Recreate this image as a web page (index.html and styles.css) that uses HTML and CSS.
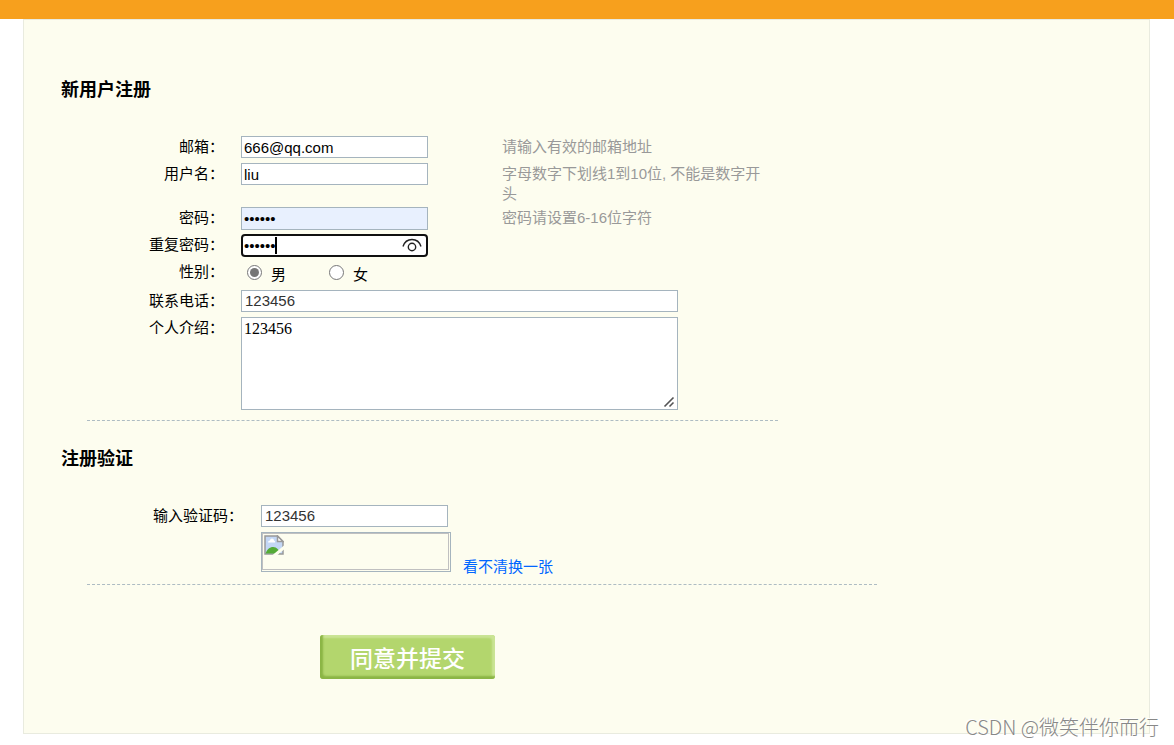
FILE: index.html
```html
<!DOCTYPE html>
<html lang="zh-CN">

<head>
    <meta charset="UTF-8">
    <meta name="viewport" content="width=device-width, initial-scale=1.0">
    <title>新用户注册</title>
    <link rel="stylesheet" href="styles.css">
</head>

<body>
    <div class="top-bar"></div>
    <form class="panel" action="#" method="post">
        <h3>新用户注册</h3>
        <div class="fields">
            <label for="email">邮箱：</label>
            <input type="text" class="text" id="email" value="666@qq.com">
            <span class="tip">请输入有效的邮箱地址</span>

            <label for="username">用户名：</label>
            <input type="text" class="text" id="username" value="liu">
            <span class="tip">字母数字下划线1到10位, 不能是数字开头</span>

            <label for="password">密码：</label>
            <input type="password" class="text filled" id="password" value="123456">
            <span class="tip">密码请设置6-16位字符</span>

            <label for="repassword">重复密码：</label>
            <div class="password-box">
                <input type="password" class="text active" id="repassword" value="123456">
                <span class="caret"></span>
                <svg class="eye" width="20" height="14" viewBox="0 0 20 14" fill="none" stroke="#222" stroke-width="1.4">
                    <path d="M1 8.500C2.500 3.800 6 1.500 10 1.500s7.500 2.300 9 7" />
                    <circle cx="10" cy="9" r="3.700" />
                </svg>
            </div>

            <span class="name">性别：</span>
            <div class="radios">
                <label><input type="radio" name="gender" value="男" checked> 男</label>
                <label><input type="radio" name="gender" value="女"> 女</label>
            </div>

            <label for="phone">联系电话：</label>
            <input type="text" class="text wide soft" id="phone" value="123456">

            <label for="introduce">个人介绍：</label>
            <textarea class="wide" id="introduce">123456</textarea>
        </div>
        <hr class="line">

        <h3>注册验证</h3>
        <div class="fields verify">
            <label for="code">输入验证码：</label>
            <input type="text" class="text soft" id="code" value="123456">
            <div class="captcha-row">
                <div class="captcha">
                    <div class="captcha-inner">
                        <!-- broken image -->
                        <svg width="20" height="20" viewBox="0 0 20 20">
                            <path d="M1 1h12.500L19 6.500V19H1z" fill="#c3d7f5" stroke="#999" stroke-width="1.500" />
                            <path d="M4 7.500a2 2 0 0 1 2-2 2 2 0 0 1 4 0 1.500 1.500 0 0 1 1 2z" fill="#fff" />
                            <path d="M1.700 18.500c1-4 4-6.500 7.500-6.500s6 3 7 6.500z" fill="#54ab36" />
                            <path d="M13.500 1v5.500H19z" fill="#fff" stroke="#999" stroke-width="1.500" />
                            <path d="M8 20.500L20.500 10v4L13 20.500z" fill="#fdfeee" />
                        </svg>
                    </div>
                </div>
                <a href="#">看不清换一张</a>
            </div>
        </div>
        <hr class="line long">

        <button type="submit">同意并提交</button>
    </form>
    <div class="watermark">CSDN @微笑伴你而行</div>
</body>

</html>
```
FILE: styles.css
```css
* {
    box-sizing: border-box;
}

body {
    position: relative;
    margin: 0;
    padding-bottom: 11px;
    font-family: "Liberation Sans", "Noto Sans CJK SC", sans-serif;
    font-size: 15px;
    line-height: 20px;
    color: #000;
    background-color: #fff;
}

.top-bar {
    height: 19px;
    background-color: #f7a01d;
}

.panel {
    margin: 0 24px 0 23px;
    padding: 58px 37px 54px;
    border: 1px solid #e9ebdf;
    background-color: #fdfdef;
}

h3 {
    margin: 0;
    font-size: 18px;
    line-height: 24px;
}

.fields {
    display: grid;
    grid-template-columns: 163px 187px 264px;
    grid-auto-rows: minmax(24px, auto);
    gap: 3px 17px;
    align-items: start;
    margin-top: 34px;
}

.fields > label,
.fields > .name {
    grid-column: 1;
    padding-top: 1px;
    text-align: right;
}

.fields > input,
.fields > textarea,
.fields > div {
    grid-column: 2;
}

.tip {
    grid-column: 3;
    margin-left: 57px;
    margin-right: -57px;
    padding-top: 1px;
    color: #999;
}

.text {
    width: 187px;
    height: 22px;
    margin: 0;
    padding: 0 2px;
    border: 1px solid #a5b4be;
    border-radius: 0;
    font-family: "Liberation Sans", sans-serif;
    font-size: 15px;
    color: #000;
    background-color: #fff;
}

.soft {
    padding: 0 3px 1px;
    color: #333;
}

.filled {
    height: 23px;
    background-color: #e8f0fe;
}

.fields > .wide {
    grid-column: 2 / 4;
    width: 437px;
}

.password-box {
    position: relative;
    height: 23px;
}

.active {
    display: block;
    height: 23px;
    padding: 0 1px;
    border: 2px solid #101010;
    border-radius: 4px;
    outline: none;
}

.caret {
    position: absolute;
    left: 34px;
    top: 3px;
    width: 2px;
    height: 17px;
    background-color: #000;
}

.eye {
    position: absolute;
    right: 6px;
    top: 4px;
}

.radios {
    display: flex;
    gap: 43px;
    height: 26px;
    padding: 4px 0 0 6px;
    white-space: nowrap;
}

.radios label {
    display: flex;
    gap: 9px;
}

.radios input {
    width: 15px;
    height: 15px;
    margin: 0;
    accent-color: #767676;
}

textarea {
    display: block;
    height: 93px;
    padding: 2px;
    border: 1px solid #a5b4be;
    font-family: "Liberation Serif", serif;
    font-size: 16px;
    line-height: 18px;
    color: #000;
}

textarea::-webkit-resizer {
    background: url("data:image/svg+xml,%3Csvg xmlns='http://www.w3.org/2000/svg' width='15' height='15'%3E%3Cpath d='M2.5 12.5l9-9M7.500 12.500l4-4' stroke='%23555' stroke-width='1.6'/%3E%3C/svg%3E") no-repeat center;
}

.line {
    width: 691px;
    margin: 10px 0 26px 26px;
    border: 0;
    border-top: 1px dashed #aebcc3;
}

.verify {
    grid-template-columns: 182px 187px;
    column-gap: 18px;
}

.captcha-row {
    display: flex;
    align-items: baseline;
    gap: 12px;
    white-space: nowrap;
}

.captcha {
    flex: none;
    width: 190px;
    height: 40px;
    padding: 0 1px 1px 0;
    border: 1px solid #a5b4be;
}

.captcha-inner {
    height: 100%;
    padding: 1px;
    border: 1px solid #c0c0c0;
}

.captcha-inner svg {
    display: block;
}

a {
    color: #06f;
    text-decoration: none;
}

.long {
    width: 790px;
    margin: 7px 0 50px 26px;
}

button {
    display: block;
    width: 175px;
    height: 44px;
    margin-left: 259px;
    padding: 0;
    border: 0;
    border-radius: 3px;
    font-family: "Noto Sans CJK SC", sans-serif;
    font-size: 23px;
    line-height: 44px;
    font-weight: 500;
    color: #fff;
    background-color: #b3d66d;
    box-shadow: inset 3px -3px 2px #8bb545, inset -3px 3px 2px #cae495;
    cursor: pointer;
}

.watermark {
    position: absolute;
    right: 15px;
    bottom: 6px;
    font-family: "Noto Sans CJK SC", sans-serif;
    font-size: 20px;
    line-height: 24px;
    font-weight: 300;
    color: #888;
    text-shadow: -1px -1px 0 #fff;
}
```
